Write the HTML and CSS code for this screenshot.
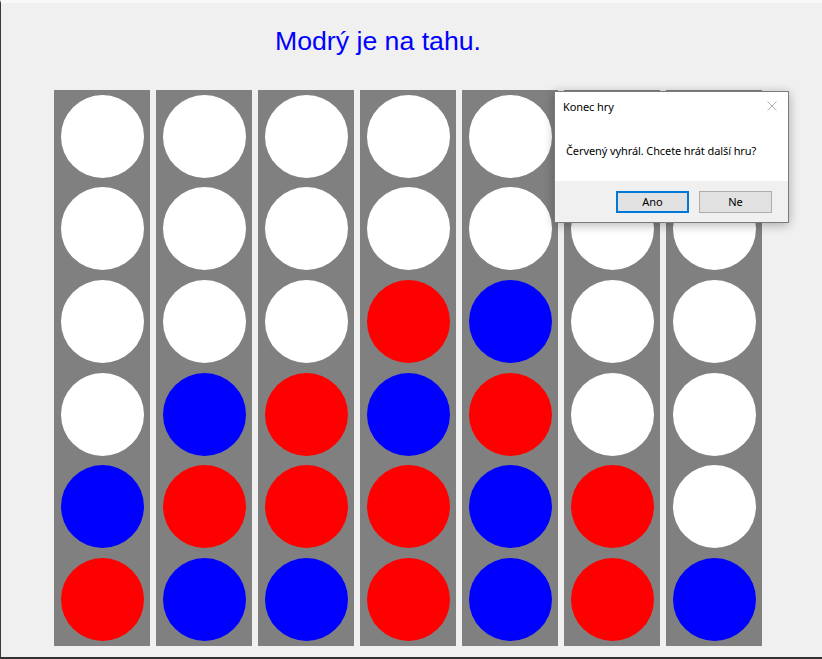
FILE: index.html
```html
<!DOCTYPE html>
<html lang="cs">
<head>
<meta charset="utf-8">
<title>Piškvorky - Čtyři v řadě</title>
<link rel="stylesheet" href="styles.css">
</head>
<body>
<div class="window">
  <h1 class="status">Modrý je na tahu.</h1>
  <div class="board">
    <div class="col">
      <span class="disc w"></span><span class="disc w"></span><span class="disc w"></span><span class="disc w"></span><span class="disc b"></span><span class="disc r"></span>
    </div>
    <div class="col">
      <span class="disc w"></span><span class="disc w"></span><span class="disc w"></span><span class="disc b"></span><span class="disc r"></span><span class="disc b"></span>
    </div>
    <div class="col">
      <span class="disc w"></span><span class="disc w"></span><span class="disc w"></span><span class="disc r"></span><span class="disc r"></span><span class="disc b"></span>
    </div>
    <div class="col">
      <span class="disc w"></span><span class="disc w"></span><span class="disc r"></span><span class="disc b"></span><span class="disc r"></span><span class="disc r"></span>
    </div>
    <div class="col">
      <span class="disc w"></span><span class="disc w"></span><span class="disc b"></span><span class="disc r"></span><span class="disc b"></span><span class="disc b"></span>
    </div>
    <div class="col">
      <span class="disc w"></span><span class="disc w"></span><span class="disc w"></span><span class="disc w"></span><span class="disc r"></span><span class="disc r"></span>
    </div>
    <div class="col">
      <span class="disc w"></span><span class="disc w"></span><span class="disc w"></span><span class="disc w"></span><span class="disc w"></span><span class="disc b"></span>
    </div>
  </div>

  <div class="dialog" role="dialog" aria-label="Konec hry">
    <div class="dlg-title">Konec hry
      <svg class="dlg-close" width="10" height="10" viewBox="0 0 10 10" aria-hidden="true">
        <path d="M0.5 0.5 L9.5 9.5 M9.5 0.5 L0.5 9.5" stroke="#b4b4b4" stroke-width="1" fill="none"/>
      </svg>
    </div>
    <div class="dlg-body">Červený vyhrál. Chcete hrát další hru?</div>
    <div class="dlg-footer">
      <button class="btn btn-default">Ano</button>
      <button class="btn">Ne</button>
    </div>
  </div>
</div>
</body>
</html>
```
FILE: styles.css
```css
html, body {
  margin: 0;
  padding: 0;
  background: #f0f0f0;
}

.window {
  position: relative;
  width: 822px;
  height: 659px;
  box-sizing: border-box;
  border-left: 1px solid #3a3a3a;
  border-top: 3px solid #f8f8f8;
  border-bottom: 2px solid #333333;
  background: #f0f0f0;
  overflow: hidden;
}

.status {
  margin: 0;
  padding: 23px 0 0 274px;
  height: 30px;
  line-height: 30px;
  font-family: "Liberation Sans", Arial, sans-serif;
  font-weight: normal;
  font-size: 26.67px;
  color: #0000ff;
}

.board {
  display: flex;
  gap: 6px;
  margin: 34px 0 0 53px;
}

.col {
  width: 96px;
  height: 556px;
  background: #808080;
  display: grid;
  grid-template-rows: repeat(6, 1fr);
  justify-items: center;
  align-items: center;
}

.disc {
  display: block;
  width: 83px;
  height: 83px;
  border-radius: 50%;
}

.w { background: #ffffff; }
.r { background: #ff0000; }
.b { background: #0000ff; }

.dialog {
  position: absolute;
  left: 553px;
  top: 88px;
  width: 235px;
  height: 132px;
  box-sizing: border-box;
  border: 1px solid #7a7a7a;
  background: #ffffff;
  box-shadow: 0 2px 10px rgba(0, 0, 0, 0.3);
  font-family: "Noto Sans", "Open Sans", sans-serif;
  font-size: 11px;
  letter-spacing: -0.1px;
  color: #000000;
  display: flex;
  flex-direction: column;
}

.dlg-title {
  position: relative;
  height: 30px;
  line-height: 30px;
  padding-left: 8px;
}

.dlg-close {
  position: absolute;
  right: 11px;
  top: 9px;
}

.dlg-body {
  height: 40px;
  padding: 19px 0 0 11px;
  line-height: 20px;
  white-space: nowrap;
}

.dlg-footer {
  flex: 1;
  background: #f0f0f0;
  display: flex;
  justify-content: flex-end;
  align-items: flex-start;
  gap: 10px;
  padding: 10px 16px 0 0;
}

.btn {
  width: 73px;
  height: 22px;
  box-sizing: border-box;
  margin: 0;
  padding: 0;
  background: #e1e1e1;
  border: 1px solid #adadad;
  font-family: "Noto Sans", "Open Sans", sans-serif;
  font-size: 11px;
  color: #000000;
  line-height: 18px;
}

.btn-default {
  border: 2px solid #0078d7;
}
```
